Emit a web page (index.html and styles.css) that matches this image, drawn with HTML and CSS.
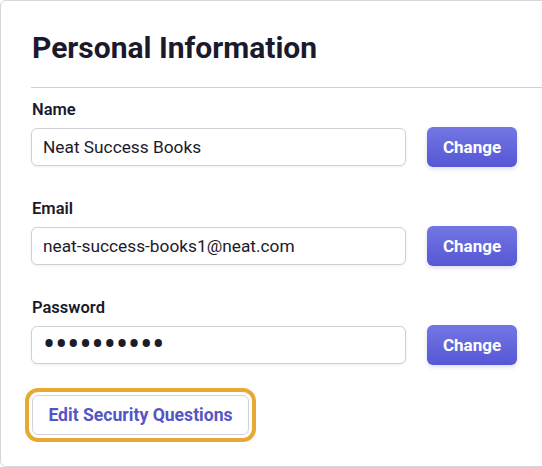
FILE: index.html
```html
<!DOCTYPE html>
<html lang="en">
<head>
<meta charset="utf-8">
<title>Personal Information</title>
<link rel="stylesheet" href="styles.css">
</head>
<body>
<section class="card">
  <h1 class="title">Personal Information</h1>
  <div class="divider"></div>
  <div class="field">
    <label class="label" for="name">Name</label>
    <div class="row">
      <input class="input" id="name" type="text" value="Neat Success Books" readonly>
      <button class="change" type="button">Change</button>
    </div>
  </div>
  <div class="field">
    <label class="label" for="email">Email</label>
    <div class="row">
      <input class="input" id="email" type="text" value="neat-success-books1@neat.com" readonly>
      <button class="change" type="button">Change</button>
    </div>
  </div>
  <div class="field">
    <label class="label" for="password">Password</label>
    <div class="row">
      <input class="input input-password" id="password" type="password" value="1234567890" readonly>
      <button class="change" type="button">Change</button>
    </div>
  </div>
  <div class="actions">
    <button class="security" type="button">Edit Security Questions</button>
  </div>
</section>
</body>
</html>
```

FILE: styles.css
```css
html, body {
  margin: 0;
  padding: 0;
  background: #ffffff;
  overflow: hidden;
}

body {
  font-family: Roboto, "Liberation Sans", Arial, sans-serif;
  color: #1b1b2b;
}

.card {
  box-sizing: border-box;
  width: 640px;
  height: 467px;
  border: 1px solid #d5d5db;
  border-radius: 6px;
  padding: 30px 0 0 30px;
}

.title {
  margin: 0;
  font-size: 30px;
  line-height: 34px;
  font-weight: 700;
  color: #1a1a2c;
  padding-left: 1px;
}

.divider {
  height: 1px;
  background: #d2d2d6;
  margin-top: 22px;
}

.field {
  display: flex;
  flex-direction: column;
  gap: 7px;
  padding-top: 12px;
  padding-bottom: 20px;
}

.label {
  font-size: 16.5px;
  line-height: 20px;
  font-weight: 600;
  color: #1a1a2c;
  padding-left: 1px;
}

.row {
  display: flex;
  align-items: center;
  gap: 21px;
  height: 40px;
}

.input {
  box-sizing: border-box;
  width: 375px;
  height: 38px;
  margin: 0;
  padding: 0 11px;
  border: 1px solid #d0d0d6;
  border-radius: 6px;
  background: #ffffff;
  box-shadow: 0 1px 3px rgba(0, 0, 0, 0.07);
  font-family: Roboto, "Liberation Sans", Arial, sans-serif;
  font-size: 17.3px;
  color: #1b1b2b;
  outline: none;
}

.input-password {
  font-size: 36px;
  letter-spacing: 0;
  padding-left: 11px;
}

.change {
  box-sizing: border-box;
  width: 90px;
  height: 40px;
  margin: 0;
  padding: 0;
  border: none;
  border-radius: 6px;
  background: linear-gradient(180deg, #7376e2 0%, #5557d6 100%);
  box-shadow: 0 2px 4px rgba(60, 60, 140, 0.18);
  color: #ffffff;
  font-family: Roboto, "Liberation Sans", Arial, sans-serif;
  font-size: 17px;
  font-weight: 700;
}

.actions {
  display: flex;
  padding-top: 10px;
}

.security {
  box-sizing: border-box;
  width: 217px;
  height: 40px;
  margin: 0 0 0 1px;
  padding: 0;
  border: 1px solid #d3d3e0;
  border-radius: 6px;
  background: #ffffff;
  color: #5356c6;
  font-family: Roboto, "Liberation Sans", Arial, sans-serif;
  font-size: 17.6px;
  font-weight: 700;
  outline: 4px solid #e8a834;
  outline-offset: 3px;
}
```
